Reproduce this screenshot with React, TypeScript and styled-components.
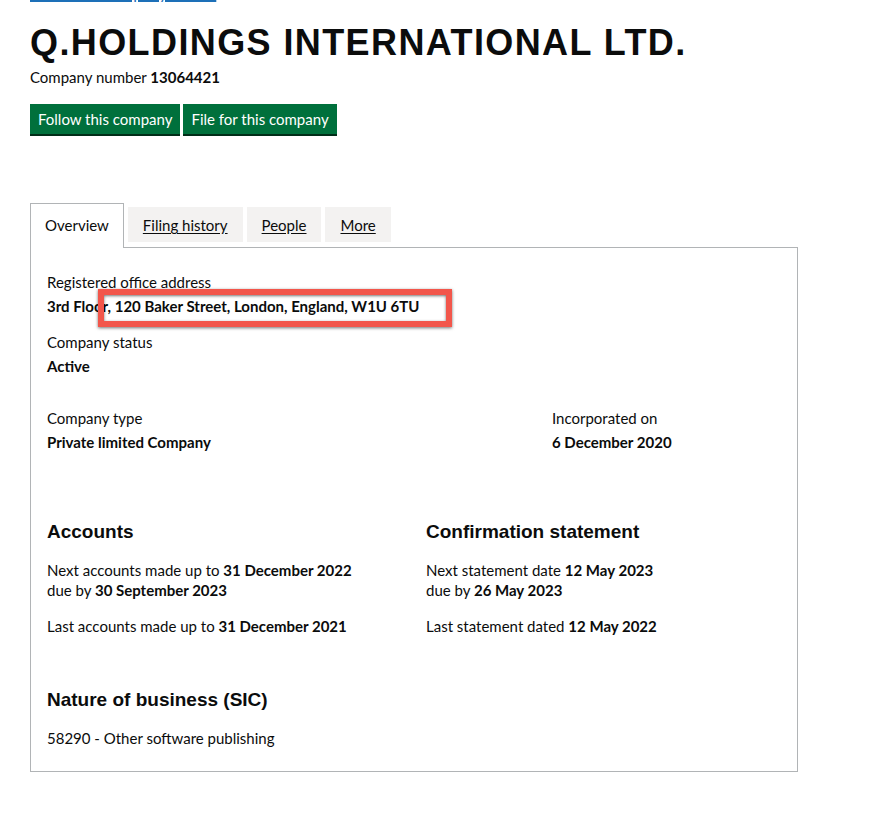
import React from "react";
import styled, { createGlobalStyle } from "styled-components";

const GlobalStyle = createGlobalStyle`
  html, body { margin: 0; padding: 0; background: #ffffff; }
  body {
    font-family: Lato, "Liberation Sans", Arial, sans-serif;
    color: #0b0c0c;
    font-size: 15px;
    line-height: 20px;
  }
`;

const Page = styled.main`
  position: relative;
  padding: 0 30px;
  width: 768px;
`;

const TopClip = styled.div`
  height: 2px;
  overflow: hidden;
`;

const TopLink = styled.a`
  display: block;
  margin-top: -17px;
  font-size: 16px;
  color: #1d70b8;
  text-decoration: underline;
  text-decoration-thickness: 2px;
  text-decoration-skip-ink: auto;
`;

const Title = styled.h1`
  margin: 21px 0 0;
  font-family: "Liberation Sans", Arial, sans-serif;
  font-weight: 700;
  font-size: 36px;
  line-height: 40px;
  letter-spacing: 1.4px;
`;

const CompanyNumber = styled.p`
  margin: 4px 0 0;
  font-size: 15px;
  line-height: 20px;
`;

const Strong = styled.strong`
  font-weight: 700;
`;

const ButtonRow = styled.div`
  display: flex;
  gap: 3px;
  margin-top: 17px;
`;

const GreenButton = styled.a`
  display: block;
  height: 30px;
  padding: 0 8px;
  box-sizing: border-box;
  background: #00703c;
  box-shadow: 0 2px 0 #002d18;
  color: #ffffff;
  font-size: 15px;
  line-height: 30px;
  text-decoration: none;
`;

const TabList = styled.ul`
  display: flex;
  align-items: flex-start;
  gap: 4px;
  list-style: none;
  margin: 69px 0 0;
  padding: 0;
  height: 44px;
`;

const Tab = styled.li<{ $selected?: boolean }>`
  box-sizing: border-box;
  padding: ${(p) => (p.$selected ? "11px 14px 0" : "8px 15px 0")};
  margin-top: ${(p) => (p.$selected ? "0" : "4px")};
  height: ${(p) => (p.$selected ? "45px" : "35px")};
  background: ${(p) => (p.$selected ? "#ffffff" : "#f3f2f1")};
  border: ${(p) => (p.$selected ? "1px solid #b1b4b6" : "none")};
  border-bottom: none;
  position: relative;
  z-index: 1;
  font-size: 15px;
  line-height: 20px;
`;

const TabLink = styled.a<{ $selected?: boolean }>`
  color: #0b0c0c;
  text-decoration: ${(p) => (p.$selected ? "none" : "underline")};
  text-underline-offset: 2px;
`;

const Panel = styled.section`
  border: 1px solid #b1b4b6;
  padding: 24px 16px 23px;
`;

const Label = styled.div`
  font-size: 15px;
  line-height: 20px;
`;

const Value = styled.div`
  margin-top: 4px;
  font-weight: 700;
  font-size: 15px;
  line-height: 20px;
`;

const Field = styled.div<{ $gap?: number }>`
  margin-top: ${(p) => p.$gap ?? 0}px;
`;

const Row = styled.div<{ $cols: string; $gap: number }>`
  display: grid;
  grid-template-columns: ${(p) => p.$cols};
  margin-top: ${(p) => p.$gap}px;
`;

const Heading = styled.h2<{ $gap?: number }>`
  margin: ${(p) => p.$gap ?? 0}px 0 0;
  font-family: "Liberation Sans", Arial, sans-serif;
  font-weight: 700;
  font-size: 19px;
  line-height: 25px;
`;

const Para = styled.p<{ $gap?: number }>`
  margin: ${(p) => p.$gap ?? 16}px 0 0;
  font-size: 15px;
  line-height: 20px;
`;

const Highlight = styled.div`
  position: absolute;
  left: 98px;
  top: 289px;
  width: 354px;
  height: 38px;
  box-sizing: border-box;
  border: 6px solid #f2564b;
  box-shadow: 0 1px 3px rgba(0, 0, 0, 0.55), inset 0 1px 3px rgba(0, 0, 0, 0.55);
  pointer-events: none;
`;

export default function App() {
  return (
    <>
      <GlobalStyle />
      <Page>
        <TopClip>
          <TopLink href="#">Advanced company search</TopLink>
        </TopClip>
        <Title>Q.HOLDINGS INTERNATIONAL LTD.</Title>
        <CompanyNumber>
          Company number <Strong>13064421</Strong>
        </CompanyNumber>
        <ButtonRow>
          <GreenButton href="#">Follow this company</GreenButton>
          <GreenButton href="#">File for this company</GreenButton>
        </ButtonRow>

        <TabList>
          <Tab $selected>
            <TabLink $selected href="#">Overview</TabLink>
          </Tab>
          <Tab>
            <TabLink href="#">Filing history</TabLink>
          </Tab>
          <Tab>
            <TabLink href="#">People</TabLink>
          </Tab>
          <Tab>
            <TabLink href="#">More</TabLink>
          </Tab>
        </TabList>

        <Panel>
          <Field>
            <Label>Registered office address</Label>
            <Value>3rd Floor, 120 Baker Street, London, England, W1U 6TU</Value>
          </Field>
          <Field $gap={16}>
            <Label>Company status</Label>
            <Value>Active</Value>
          </Field>
          <Row $cols="505px 1fr" $gap={32}>
            <Field>
              <Label>Company type</Label>
              <Value>Private limited Company</Value>
            </Field>
            <Field>
              <Label>Incorporated on</Label>
              <Value>6 December 2020</Value>
            </Field>
          </Row>

          <Row $cols="379px 1fr" $gap={67}>
            <div>
              <Heading>Accounts</Heading>
              <Para>
                Next accounts made up to <Strong>31 December 2022</Strong>
                <br />
                due by <Strong>30 September 2023</Strong>
              </Para>
              <Para>
                Last accounts made up to <Strong>31 December 2021</Strong>
              </Para>
            </div>
            <div>
              <Heading>Confirmation statement</Heading>
              <Para>
                Next statement date <Strong>12 May 2023</Strong>
                <br />
                due by <Strong>26 May 2023</Strong>
              </Para>
              <Para>
                Last statement dated <Strong>12 May 2022</Strong>
              </Para>
            </div>
          </Row>

          <Heading $gap={51}>Nature of business (SIC)</Heading>
          <Para>58290 - Other software publishing</Para>
        </Panel>
        <Highlight />
      </Page>
    </>
  );
}
